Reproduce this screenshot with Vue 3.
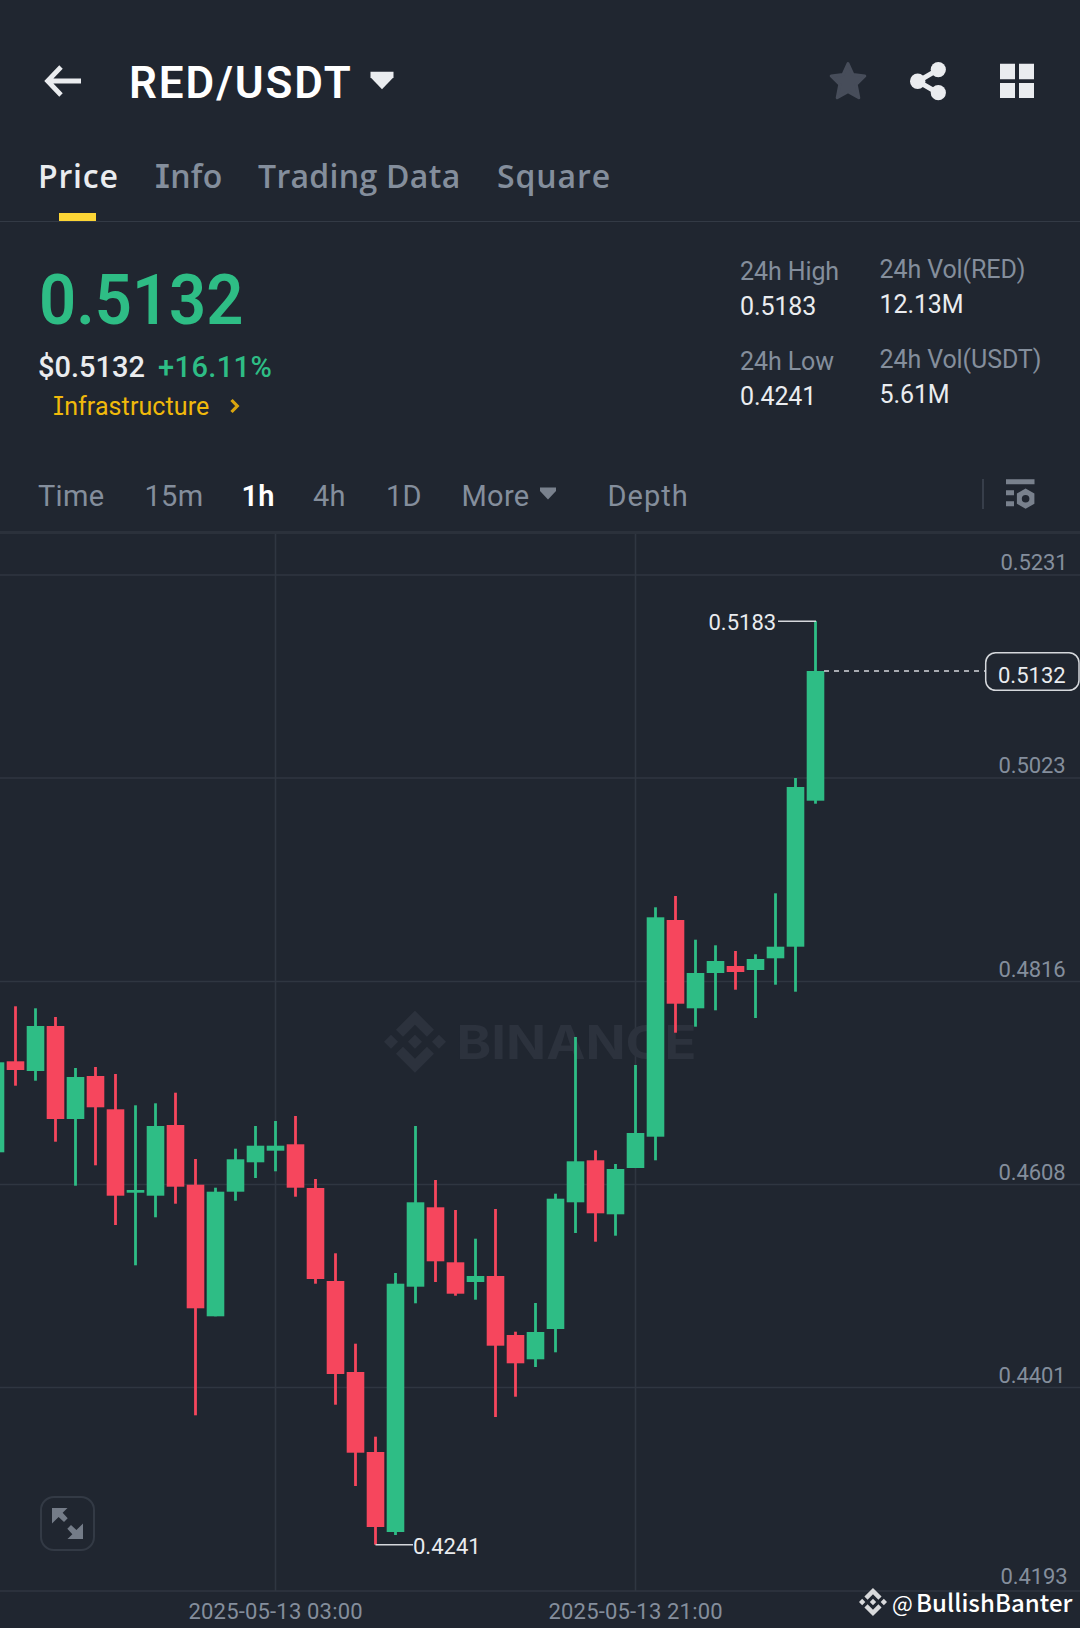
<script setup>
const tabs = [
  { initial: 'P', rest: 'rice', width: 117, active: true },
  { initial: 'I', rest: 'nfo', width: 103, serif: true },
  { initial: 'T', rest: 'rading Data', width: 239 },
  { initial: 'S', rest: 'quare', width: 130 },
]

const stats = [
  [
    { label: '24h High', value: '0.5183' },
    { label: '24h Low', value: '0.4241' },
  ],
  [
    { label: '24h Vol(RED)', value: '12.13M' },
    { label: '24h Vol(USDT)', value: '5.61M' },
  ],
]

const gridLines = [575, 778, 981.5, 1184.5, 1387.5, 1591]
const priceLabels = [
  { text: '0.5231', x: 1000.5, y: 570 },
  { text: '0.5023', x: 998.5, y: 773 },
  { text: '0.4816', x: 998.5, y: 977 },
  { text: '0.4608', x: 998.5, y: 1180 },
  { text: '0.4401', x: 998.5, y: 1383 },
  { text: '0.4193', x: 1000.5, y: 1584 },
]
const dates = [
  { text: '2025-05-13 03:00', x: 275.5 },
  { text: '2025-05-13 21:00', x: 635.5 },
]

// [rising, high, bodyTop, bodyBottom, low], one entry per hour
const candles = [
  [1, 1062.3, 1062.3, 1152.3, 1152.3],
  [0, 1006.3, 1061.3, 1070, 1085.7],
  [1, 1008.3, 1026, 1071, 1080.7],
  [0, 1017, 1026, 1119, 1141.7],
  [1, 1068, 1077, 1119, 1185.7],
  [0, 1067, 1076, 1107.3, 1165.3],
  [0, 1074, 1109.3, 1195.7, 1225],
  [1, 1105.3, 1190, 1192.7, 1265.3],
  [1, 1103.3, 1126, 1195.7, 1217.3],
  [0, 1092.7, 1125, 1186.7, 1203.7],
  [0, 1159, 1184.7, 1308.3, 1415.3],
  [1, 1187.7, 1191.7, 1316.3, 1316.3],
  [1, 1148.7, 1159.3, 1191.7, 1200.7],
  [1, 1126, 1145.7, 1162.3, 1178],
  [1, 1121, 1145.7, 1150.7, 1171.3],
  [0, 1116, 1144.3, 1187.7, 1196.7],
  [0, 1179, 1188, 1279, 1283.7],
  [0, 1253.3, 1281, 1374, 1404.7],
  [0, 1343.7, 1372, 1452.7, 1486],
  [0, 1436.7, 1452, 1527, 1544.7],
  [1, 1273, 1283.7, 1532, 1535],
  [1, 1126, 1202.3, 1286.7, 1303.3],
  [0, 1180, 1207.3, 1261.3, 1282],
  [0, 1210, 1262.3, 1293.7, 1295.7],
  [1, 1238.7, 1276, 1282, 1299.7],
  [0, 1209, 1276, 1345.7, 1417],
  [0, 1331.7, 1335, 1363.3, 1396.7],
  [1, 1303, 1332, 1359.3, 1367],
  [1, 1193.7, 1198.7, 1329, 1352.3],
  [1, 1037, 1161.3, 1202.3, 1233],
  [0, 1150.3, 1160.3, 1213.3, 1241.7],
  [1, 1164, 1169, 1214.3, 1235.7],
  [1, 1065, 1133, 1168, 1168],
  [1, 907.3, 917.3, 1136.7, 1160.3],
  [0, 896, 920, 1003.7, 1032.7],
  [1, 939.7, 973, 1008.3, 1026.7],
  [1, 945.3, 961, 973, 1010.3],
  [0, 951, 966, 972, 989.7],
  [1, 954.3, 959, 970, 1018],
  [1, 893.3, 946.7, 958.3, 984.7],
  [1, 778, 787, 946.7, 991.7],
  [1, 621, 671, 800.7, 803.7],
].map(([up, high, top, bottom, low], i) => ({
  color: up ? '#2ebd85' : '#f6465d',
  x: i * 20 - 4.5,
  high,
  top,
  bottom,
  low,
}))
</script>

<template>
  <div class="screen">
    <header class="header">
      <svg class="back" width="38" height="32" viewBox="0 0 38 32" fill="none" stroke="#eaecef" stroke-width="4.8">
        <path d="M17 2 3.6 16 17 30M4 16h33" />
      </svg>
      <h1>RED/USDT</h1>
      <svg class="pair-caret" width="24" height="19" viewBox="0 0 24 19" fill="#eaecef">
        <path d="M.5 .7h23v5.5L12 18.3.5 6.2z" />
      </svg>
      <div class="actions">
        <svg width="38" height="40" viewBox="0 0 38 40" fill="#474d5a" stroke="#474d5a" stroke-width="3" stroke-linejoin="round">
          <path d="M19 2.6 24 13.6 35.8 15 27.2 23.4 29.8 36.8 19 30.8 8.2 36.8 10.8 23.4 2.2 15 14 13.6z" />
        </svg>
        <svg class="share" width="38" height="40" viewBox="0 0 38 40" fill="#eaecef">
          <path d="M9 20.3 29 8.6M9 20.3 29 32" stroke="#eaecef" stroke-width="5" />
          <circle cx="8.7" cy="20.3" r="7.7" />
          <circle cx="29.3" cy="8.6" r="7.6" />
          <circle cx="29.3" cy="31.7" r="7.6" />
        </svg>
        <svg class="apps" width="34" height="36" viewBox="0 0 34 36" fill="#eaecef">
          <path d="M0 .7h15v15.6H0zM19 .7h15v15.6H19zM0 19.900h15v15H0zM19 19.900h15v15H19z" />
        </svg>
      </div>
    </header>

    <nav class="tabs">
      <div v-for="tab in tabs" :key="tab.rest" class="tab" :class="{ active: tab.active }" :style="{ width: tab.width + 'px' }">
        <span :class="{ serif: tab.serif }">{{ tab.initial }}</span>{{ tab.rest }}
      </div>
    </nav>

    <section class="summary">
      <div class="quote">
        <div class="price">0.5132</div>
        <div class="sub"><span class="usd">$0.5132</span><span class="change">+16.11%</span></div>
        <div class="tag">
          <span><span class="serif">I</span>nfrastructure</span>
          <svg width="10" height="16" viewBox="0 0 10 16" fill="none" stroke="#d9a50f" stroke-width="3.2">
            <path d="M1.500 2 7.300 8 1.500 14" />
          </svg>
        </div>
      </div>
      <div v-for="(col, i) in stats" :key="i" class="stat-col" :class="'col-' + i">
        <div v-for="s in col" :key="s.label" class="stat">
          <div class="label">{{ s.label }}</div>
          <div class="value">{{ s.value }}</div>
        </div>
      </div>
    </section>

    <nav class="intervals">
      <span>Time</span>
      <span>15m</span>
      <span class="on">1h</span>
      <span>4h</span>
      <span>1D</span>
      <span class="more">More
        <svg width="16" height="13" viewBox="0 0 16 13" fill="#79818d"><path d="M0 .5h16v3.6L8 12.6 0 4.1z" /></svg>
      </span>
      <span class="depth">Depth</span>
      <i class="divider"></i>
      <svg class="settings" width="29" height="32" viewBox="0 0 29 32" fill="#79818d">
        <path d="M0 1.3h28.5v5H0zM0 12.3h8v5H0zM0 23.3h8v5H0z" />
        <path fill-rule="evenodd" d="M19.6 10.600 28.4 15.600v10.200l-8.8 5-8.7-5V15.600zM19.6 17a3.8 3.8 0 1 0 0 7.6 3.8 3.8 0 0 0 0-7.6z" />
      </svg>
    </nav>

    <div class="chart">
      <svg width="1080" height="1094" viewBox="0 534 1080 1094">
        <g stroke="#2f3641" stroke-width="1.6">
          <line v-for="y in gridLines" :key="y" x1="0" x2="1080" :y1="y" :y2="y" />
          <line v-for="d in dates" :key="d.x" :x1="d.x" :x2="d.x" y1="534" y2="1591" />
        </g>

        <g fill="#2c323d">
          <path transform="translate(384 1010.7) scale(2.583)" d="M16.624 13.9202l2.7175 2.7154-7.353 7.353-7.353-7.352 2.7175-2.7164 4.6355 4.6595 4.6356-4.6595zm4.6366-4.6366L24 12l-2.7154 2.7164L18.5682 12l2.6924-2.7164zm-9.272.001l2.7163 2.6914-2.7164 2.7174v-.001L9.2721 12l2.7164-2.7154zm-9.2722-.001L5.4088 12l-2.6914 2.6924L0 12l2.7164-2.7164zM11.9885.0115l7.353 7.329-2.7174 2.7154-4.6356-4.6356-4.6355 4.6595-2.7174-2.7154 7.353-7.353z" />
          <text class="brand" x="456.5" y="1059" textLength="240" lengthAdjust="spacingAndGlyphs">BINANCE</text>
        </g>

        <g v-for="c in candles" :key="c.x" :fill="c.color">
          <rect :x="c.x - 1.4" :y="c.high" width="2.8" :height="c.low - c.high" />
          <rect :x="c.x - 8.8" :y="c.top" width="17.6" :height="c.bottom - c.top" />
        </g>

        <g stroke="#d5d8dc" stroke-width="1.5" fill="none">
          <path d="M778 621.3h38M375.5 1544.7H413" />
          <path d="M824 671H985" stroke-dasharray="5 5" />
          <rect x="985.7" y="652.7" width="93.3" height="37.6" rx="10" fill="#202630" />
        </g>

        <g class="axis">
          <text v-for="p in priceLabels" :key="p.text" :x="p.x" :y="p.y">{{ p.text }}</text>
          <text v-for="d in dates" :key="d.text" :x="d.x" y="1619" text-anchor="middle" textLength="174">{{ d.text }}</text>
        </g>
        <g class="marks">
          <text x="708.5" y="630">0.5183</text>
          <text x="998" y="682.7">0.5132</text>
          <text x="413" y="1554">0.4241</text>
        </g>
      </svg>

      <button class="expand" aria-label="Full screen">
        <svg width="31" height="31" viewBox="0 0 32 32" fill="#747c88">
          <path d="M0 0h16l-5 5 5.200 5.600-3.800 3.800-5.600-5.200L0 16z" />
          <path d="M32 32H16l5-5-5.200-5.600 3.800-3.800 5.600 5.200L32 16z" />
        </svg>
      </button>

      <div class="credit">
        <svg width="28" height="28" viewBox="0 0 24 24" fill="#d8d9db">
          <path d="M16.624 13.9202l2.7175 2.7154-7.353 7.353-7.353-7.352 2.7175-2.7164 4.6355 4.6595 4.6356-4.6595zm4.6366-4.6366L24 12l-2.7154 2.7164L18.5682 12l2.6924-2.7164zm-9.272.001l2.7163 2.6914-2.7164 2.7174v-.001L9.2721 12l2.7164-2.7154zm-9.2722-.001L5.4088 12l-2.6914 2.6924L0 12l2.7164-2.7164zM11.9885.0115l7.353 7.329-2.7174 2.7154-4.6356-4.6356-4.6355 4.6595-2.7174-2.7154 7.353-7.353z" />
        </svg>
        <span class="at">@</span>
        <span class="author">BullishBanter</span>
      </div>
    </div>
  </div>
</template>

<style>
body {
  background: #202630;
}
</style>

<style scoped>
.screen {
  width: 1080px;
  height: 1628px;
  overflow: hidden;
  background: #202630;
  color: #eaecef;
  font-family: Roboto, "Noto Sans", sans-serif;
  white-space: nowrap;
}
.screen svg {
  display: block;
  flex: none;
}
.serif {
  font-family: Inter, sans-serif;
  font-feature-settings: "cv08" 1;
}

.header {
  box-sizing: border-box;
  height: 128px;
  padding: 38px 46px 0 44px;
  display: flex;
  align-items: center;
}
.back {
  margin-top: -4px;
}
h1 {
  margin: 0 0 0 47px;
  width: 241px;
  font-size: 44px;
  line-height: 90px;
  font-weight: 600;
  letter-spacing: 1.9px;
  color: #fff;
}
.pair-caret {
  margin-top: -5px;
}
.actions {
  margin: -5px 0 0 auto;
  display: flex;
  align-items: center;
}
.share {
  margin-left: 42px;
}
.apps {
  margin-left: 53px;
}

.tabs {
  height: 93px;
  padding-left: 38px;
  display: flex;
  border-bottom: 1px solid #333a45;
  font: 600 32px/96px "Open Sans", "Noto Sans", sans-serif;
  letter-spacing: 0.3px;
  color: #848e9c;
}
.tab {
  position: relative;
  height: 93px;
}
.tab.active {
  color: #eaecef;
  letter-spacing: 0.8px;
}
.tab:last-child {
  letter-spacing: 0.9px;
}
.tab.active::after {
  content: "";
  position: absolute;
  left: 21px;
  bottom: 0;
  width: 37px;
  height: 8px;
  background: #fcd535;
}

.summary {
  box-sizing: border-box;
  height: 239px;
  padding: 32px 0 0 38px;
  display: flex;
  align-items: flex-start;
}
.quote {
  width: 702px;
}
.price {
  margin-left: 1px;
  font-size: 70px;
  line-height: 92px;
  font-weight: 600;
  color: #2ebd85;
  transform: scaleX(0.93);
  transform-origin: left;
}
.sub {
  display: flex;
  font-size: 29px;
  line-height: 42px;
  font-weight: 500;
}
.usd {
  width: 120px;
}
.change {
  color: #2ebd85;
  letter-spacing: 0.4px;
}
.tag {
  display: flex;
  align-items: center;
  padding-left: 15px;
  font-size: 25px;
  line-height: 37px;
  letter-spacing: 0.1px;
  color: #f0b90b;
}
.tag svg {
  margin: -1px 0 0 21px;
}
.stat-col {
  display: flex;
  flex-direction: column;
  gap: 20px;
  font-size: 25px;
  line-height: 35px;
  letter-spacing: -0.1px;
}
.col-0 {
  width: 139.5px;
}
.col-1 {
  margin-top: -2px;
}
.label {
  color: #848e9c;
}

.intervals {
  height: 70px;
  padding-left: 38px;
  display: grid;
  grid-template-columns: 106.5px 97px 71.5px 73px 75.5px 146px 374.5px 24px 29px;
  align-items: center;
  border-bottom: 3px solid #2b313b;
  font-size: 29px;
  letter-spacing: 0.3px;
  color: #848e9c;
}
.on {
  color: #fff;
  font-weight: 600;
}
.more {
  display: flex;
  align-items: center;
  gap: 10px;
}
.more svg {
  margin-top: -6px;
}
.depth {
  letter-spacing: 1px;
}
.divider {
  width: 2px;
  height: 30px;
  margin-top: -4px;
  background: #373e4a;
}
.settings {
  margin-top: -4px;
}

.chart {
  position: relative;
  height: 1094px;
}
.axis {
  font-size: 22px;
  letter-spacing: -0.1px;
  fill: #848e9c;
}
.marks {
  font-size: 22px;
  fill: #eaecef;
}
.brand {
  font: 700 47px Inter, sans-serif;
}
.expand {
  position: absolute;
  left: 40px;
  top: 962px;
  box-sizing: border-box;
  width: 55px;
  height: 55px;
  padding: 0 1px 1px 0;
  display: grid;
  place-items: center;
  border: 2px solid #333a45;
  border-radius: 14px;
  background: #202630;
}
.credit {
  position: absolute;
  left: 859px;
  bottom: 12px;
  display: flex;
  align-items: center;
  font: 500 24px/28px "Noto Sans CJK SC", sans-serif;
  color: #fff;
}
.at {
  width: 24px;
  margin-left: 5px;
  font-size: 22px;
  font-weight: 400;
}
.author {
  letter-spacing: 0.05px;
}
</style>
